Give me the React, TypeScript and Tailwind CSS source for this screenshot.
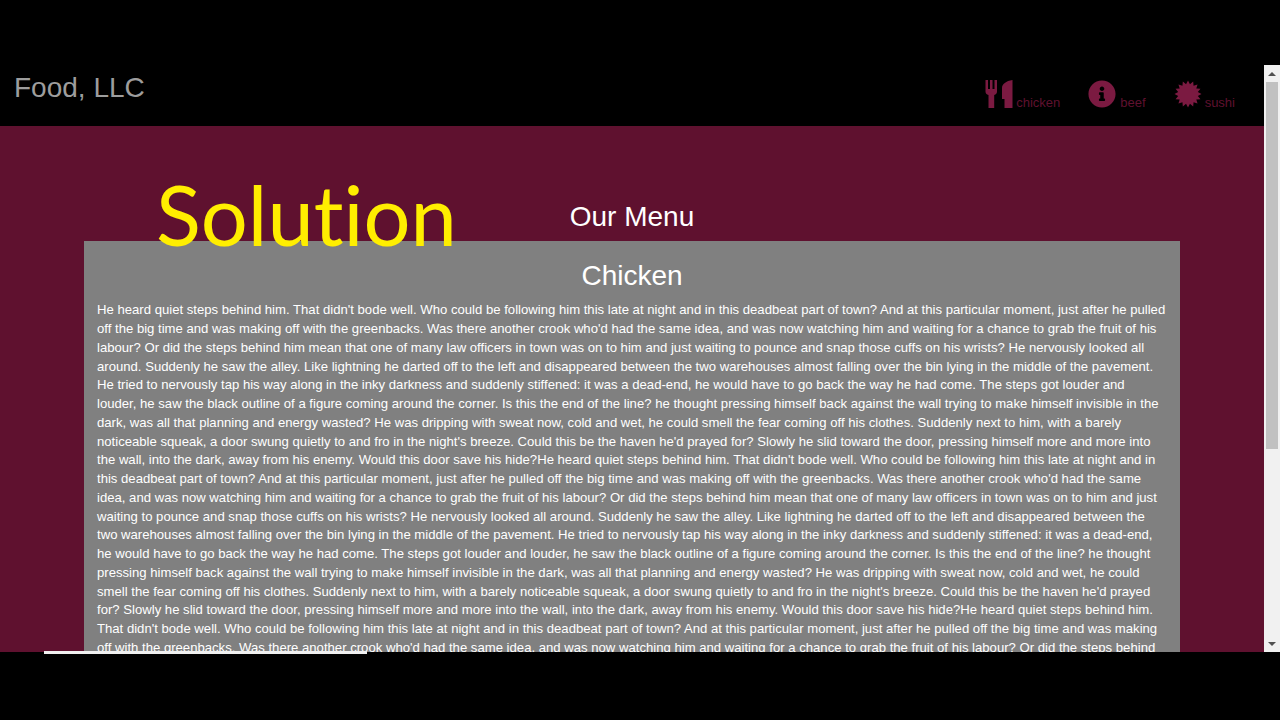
import React from "react";
import { FaInfoCircle } from "react-icons/fa";

const lines = [
  "He heard quiet steps behind him. That didn't bode well. Who could be following him this late at night and in this deadbeat part of town? And at this particular moment, just after he pulled",
  "off the big time and was making off with the greenbacks. Was there another crook who'd had the same idea, and was now watching him and waiting for a chance to grab the fruit of his",
  "labour? Or did the steps behind him mean that one of many law officers in town was on to him and just waiting to pounce and snap those cuffs on his wrists? He nervously looked all",
  "around. Suddenly he saw the alley. Like lightning he darted off to the left and disappeared between the two warehouses almost falling over the bin lying in the middle of the pavement.",
  "He tried to nervously tap his way along in the inky darkness and suddenly stiffened: it was a dead-end, he would have to go back the way he had come. The steps got louder and",
  "louder, he saw the black outline of a figure coming around the corner. Is this the end of the line? he thought pressing himself back against the wall trying to make himself invisible in the",
  "dark, was all that planning and energy wasted? He was dripping with sweat now, cold and wet, he could smell the fear coming off his clothes. Suddenly next to him, with a barely",
  "noticeable squeak, a door swung quietly to and fro in the night's breeze. Could this be the haven he'd prayed for? Slowly he slid toward the door, pressing himself more and more into",
  "the wall, into the dark, away from his enemy. Would this door save his hide?He heard quiet steps behind him. That didn't bode well. Who could be following him this late at night and in",
  "this deadbeat part of town? And at this particular moment, just after he pulled off the big time and was making off with the greenbacks. Was there another crook who'd had the same",
  "idea, and was now watching him and waiting for a chance to grab the fruit of his labour? Or did the steps behind him mean that one of many law officers in town was on to him and just",
  "waiting to pounce and snap those cuffs on his wrists? He nervously looked all around. Suddenly he saw the alley. Like lightning he darted off to the left and disappeared between the",
  "two warehouses almost falling over the bin lying in the middle of the pavement. He tried to nervously tap his way along in the inky darkness and suddenly stiffened: it was a dead-end,",
  "he would have to go back the way he had come. The steps got louder and louder, he saw the black outline of a figure coming around the corner. Is this the end of the line? he thought",
  "pressing himself back against the wall trying to make himself invisible in the dark, was all that planning and energy wasted? He was dripping with sweat now, cold and wet, he could",
  "smell the fear coming off his clothes. Suddenly next to him, with a barely noticeable squeak, a door swung quietly to and fro in the night's breeze. Could this be the haven he'd prayed",
  "for? Slowly he slid toward the door, pressing himself more and more into the wall, into the dark, away from his enemy. Would this door save his hide?He heard quiet steps behind him.",
  "That didn't bode well. Who could be following him this late at night and in this deadbeat part of town? And at this particular moment, just after he pulled off the big time and was making",
  "off with the greenbacks. Was there another crook who'd had the same idea, and was now watching him and waiting for a chance to grab the fruit of his labour? Or did the steps behind",
];

const CutleryIcon = () => (
  <svg viewBox="0 0 28 28" className="w-[28px] h-[28px] block" fill="currentColor">
    <path d="M.5 0H3v9h2V0h2.5v9h2V0H12v11.5c0 1.8-1 3-2.8 3.6V28H3.5V15.1C1.5 14.5.5 13.3.5 11.5z" />
    <path d="M27.5 0v28h-8v-9H17V8C17 4 21 1 27.5 0z" />
  </svg>
);

// 16 point burst
const burstPoints = Array.from({ length: 32 }, (_, i) => {
  const r = i % 2 === 0 ? 13.5 : 10;
  const a = (i * Math.PI) / 16;
  return `${(14 + r * Math.sin(a)).toFixed(2)},${(14 - r * Math.cos(a)).toFixed(2)}`;
}).join(" ");

const BurstIcon = () => (
  <svg viewBox="0 0 28 28" className="w-[28px] h-[28px] block" fill="currentColor">
    <polygon points={burstPoints} />
  </svg>
);

const NavItem = ({ icon, label, className }: { icon: React.ReactNode; label: string; className: string }) => (
  <a href="#" className={`flex items-end ${className}`}>
    <span className="text-[#7b1a41] text-[28px] leading-none">{icon}</span>
    <span className="text-[13px] leading-[15px] mb-[-2px] ml-[3px] text-[#5f112f]">{label}</span>
  </a>
);

export default function App() {
  return (
    <div className="h-screen overflow-hidden bg-black flex flex-col font-['Liberation_Sans',Arial,sans-serif]">
      <div className="h-[65px] shrink-0" />

      <div className="h-[587px] shrink-0 flex">
        <div className="flex-1 min-w-0 flex flex-col">
          <header className="h-[61px] shrink-0 bg-black flex justify-between pl-[14px] pr-[29px]">
            <span className="text-[28px] leading-[46px] text-[#9d9d9d]">Food, LLC</span>
            <nav className="flex items-start pt-[15px]">
              <NavItem icon={<CutleryIcon />} label="chicken" className="mr-[28px]" />
              <NavItem icon={<FaInfoCircle />} label="beef" className="mr-[28px] gap-px" />
              <NavItem icon={<BurstIcon />} label="sushi" className="" />
            </nav>
          </header>

          <main className="flex-1 min-h-0 overflow-hidden bg-[#5f112f] px-[84px] relative">
            <h1 className="absolute z-10 left-[156px] top-[38px] text-[83px] leading-[100px] text-[#ffee00] font-['Lato',sans-serif] [font-variant-ligatures:none] whitespace-nowrap">
              Solution
            </h1>
            <h2 className="h-[115px] pt-[75px] text-center text-[28px] leading-[32px] text-white">Our Menu</h2>
            <section className="bg-[#808080] px-[13px] pt-[19px] text-white">
              <h3 className="text-center text-[28px] leading-[32px] mb-[9.25px]">Chicken</h3>
              <p className="text-[13.13px] leading-[18.75px] whitespace-nowrap">
                {lines.map((line) => (
                  <span key={line} className="block">
                    {line}
                  </span>
                ))}
              </p>
            </section>
          </main>
        </div>

        <div className="w-4 shrink-0 bg-[#f1f1f1] flex flex-col items-center">
          <div className="h-[17px] flex items-center justify-center">
            <div className="w-0 h-0 border-x-[4px] border-x-transparent border-b-[4px] border-b-[#505050]" />
          </div>
          <div className="w-[12px] h-[367px] bg-[#c1c1c1]" />
          <div className="flex-1" />
          <div className="h-[17px] flex items-center justify-center">
            <div className="w-0 h-0 border-x-[4px] border-x-transparent border-t-[4px] border-t-[#505050]" />
          </div>
        </div>
      </div>

      <div className="flex-1 bg-black relative">
        <div className="absolute left-[44px] top-[-1px] w-[323px] h-[3px] bg-[#f0f0f0]" />
      </div>
    </div>
  );
}
